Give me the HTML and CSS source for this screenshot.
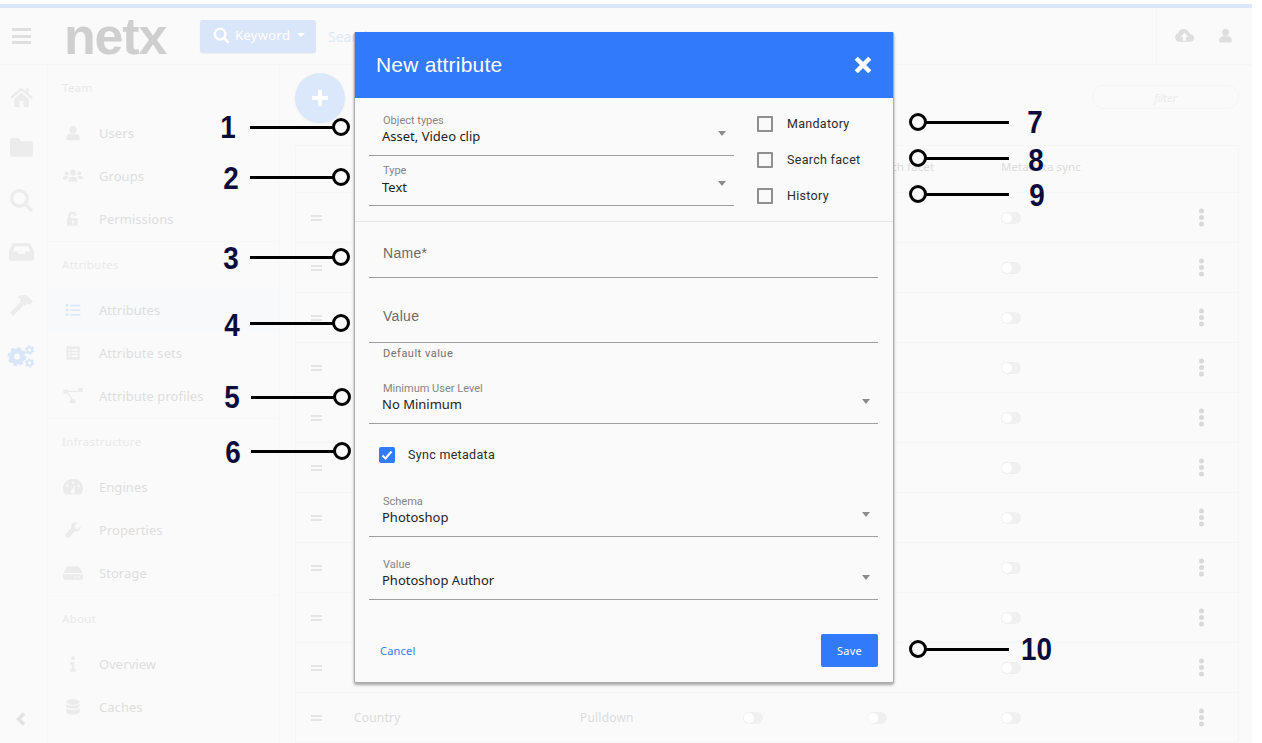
FILE: index.html
```html
<!DOCTYPE html>
<html lang="en">
<head>
<meta charset="utf-8">
<title>New attribute</title>
<link rel="stylesheet" href="styles.css">
</head>
<body>
<svg class="defs" width="0" height="0">
  <symbol id="i-user" viewBox="0 0 24 24"><circle cx="12" cy="7" r="5.5"/><path d="M2 21v-2c0-4 3-6 6-6h8c3 0 6 2 6 6v2a2 2 0 0 1-2 2H4a2 2 0 0 1-2-2z"/></symbol>
  <symbol id="i-users" viewBox="0 0 24 18"><circle cx="12" cy="5" r="3.6"/><circle cx="4.5" cy="6" r="2.4"/><circle cx="19.500" cy="6" r="2.400"/><path d="M6.500 16v-2c0-2.500 2-4 4-4h3c2 0 4 1.500 4 4v2zM0 12c0-2 1-3 3-3h2.500c.6 0 1 .3 1.300.6C5.500 10.500 5 12 5 13H0zM24 12c0-2-1-3-3-3h-2.500c-.6 0-1 .3-1.300.6 1.300.9 1.800 2.400 1.800 3.400h5z"/></symbol>
  <symbol id="i-lock" viewBox="0 0 24 24"><path fill-rule="evenodd" d="M5 11V7a6 6 0 0 1 12 0h-3a3 3 0 0 0-6 0v4h11v11H3V11zM12 14a2 2 0 0 0-1 3.700V20h2v-2.300A2 2 0 0 0 12 14z"/></symbol>
  <symbol id="i-list" viewBox="0 0 24 24"><rect x="1" y="3" width="4" height="4"/><rect x="1" y="10" width="4" height="4"/><rect x="1" y="17" width="4" height="4"/><rect x="8" y="4" width="15" height="2.500"/><rect x="8" y="11" width="15" height="2.500"/><rect x="8" y="18" width="15" height="2.500"/></symbol>
  <symbol id="i-sets" viewBox="0 0 24 24"><path fill-rule="evenodd" d="M2 2h20v20H2zM5 6v2.500h3V6zm5 0v2.500h9V6zM5 10.700v2.500h3v-2.500zm5 0v2.500h9v-2.500zM5 15.500V18h3v-2.500zm5 0V18h9v-2.500z"/></symbol>
  <symbol id="i-profile" viewBox="0 0 24 20"><rect x="0" y="2" width="6" height="5"/><rect x="18" y="0" width="6" height="5"/><rect x="8" y="14" width="7" height="5"/><path d="M6 3.500h12v1.500H6zM5 6.500l1.300-.8 5.500 8.500-1.300.8z"/></symbol>
  <symbol id="i-gauge" viewBox="0 0 24 20"><path fill-rule="evenodd" d="M12 0a12 12 0 0 1 10.500 18.500l-.7.9H2.200l-.7-.9A12 12 0 0 1 12 0zM12 3a1.500 1.500 0 1 0 0 3 1.500 1.500 0 0 0 0-3zM5 7a1.500 1.500 0 1 0 0 3 1.500 1.500 0 0 0 0-3zM19 7a1.500 1.500 0 1 0 0 3 1.500 1.500 0 0 0 0-3zM14.500 7.500L11 13a2.500 2.500 0 1 0 2.500 1z"/></symbol>
  <symbol id="i-wrench" viewBox="0 0 24 24"><path d="M23 6l-4.500 4.500-3.500-1-1-3.500L18.500 1.500C15-.500 10.500 1 9.500 5c-.3 1.200-.2 2.700.3 3.800L1.500 17.500a3.500 3.500 0 0 0 5 5l8.500-8.500c4.500 1.500 10-2.500 8-8z"/></symbol>
  <symbol id="i-storage" viewBox="0 0 24 16"><path fill-rule="evenodd" d="M5 0h14l4.500 8H.5zM0 9.500h24V14a2 2 0 0 1-2 2H2a2 2 0 0 1-2-2zM15 12a1 1 0 1 0 0 2 1 1 0 0 0 0-2zM19 12a1 1 0 1 0 0 2 1 1 0 0 0 0-2z"/></symbol>
  <symbol id="i-info" viewBox="0 0 12 24"><circle cx="6" cy="3.500" r="3"/><path d="M1.500 9H8v11h2.500v3.500h-9V20H4v-7.500H1.500z"/></symbol>
  <symbol id="i-db" viewBox="0 0 24 24"><ellipse cx="12" cy="4.500" rx="10" ry="4"/><path d="M2 7.500c2 3 18 3 20 0V12c-2 3.500-18 3.500-20 0zM2 14c2 3.500 18 3.500 20 0v5.500c-1 5-19 5-20 0z"/></symbol>
</svg>

<div class="app">
  <header class="topbar">
    <div class="burger"><i></i><i></i><i></i></div>
    <div class="logo">netx</div>
    <button class="keyword">
      <svg class="kw-search" viewBox="0 0 24 24"><circle cx="10" cy="10" r="7.500"/><path d="M15.500 15.500L22 22"/></svg>
      <span>Keyword</span><b class="kw-caret"></b>
    </button>
    <span class="search-hint">Search</span>
    <div class="top-actions">
      <svg class="top-cloud" viewBox="0 0 24 18"><path fill-rule="evenodd" d="M19.500 7.500A4.500 4.500 0 0 1 19 17H5.500A5.500 5.500 0 0 1 4 6.300 7 7 0 0 1 17.200 4.800a4.500 4.500 0 0 1 2.300 2.700zM12 5.500L7 10.500h3v5h4v-5h3z"/></svg>
      <svg class="top-user" viewBox="0 0 24 24"><use href="#i-user"/></svg>
    </div>
  </header>
  <div class="workspace">
    <nav class="rail">
      <svg class="rail-ico" viewBox="0 0 24 24"><path d="M12 3L1 12.500l1.500 1.700L12 6.200l9.500 8 1.500-1.700-4-3.400V4h-3v3.200zM5 14.500l7-6 7 6V22h-5v-6h-4v6H5z"/></svg>
      <svg class="rail-ico" viewBox="0 0 24 24"><path d="M1 4a2 2 0 0 1 2-2h6.500l2.500 3h9a2 2 0 0 1 2 2v11a2 2 0 0 1-2 2H3a2 2 0 0 1-2-2z"/></svg>
      <svg class="rail-ico rail-stroke" viewBox="0 0 24 24"><circle cx="10" cy="10" r="7.500"/><path d="M15.500 15.500L22 22"/></svg>
      <svg class="rail-ico" viewBox="0 0 24 24"><path fill-rule="evenodd" d="M5 3h14a2 2 0 0 1 1.800 1L24 11v7a2 2 0 0 1-2 2H2a2 2 0 0 1-2-2v-7L3.200 4A2 2 0 0 1 5 3zM5.500 6L3.500 11H8l1.500 2.500h5L16 11h4.500l-2-5z"/></svg>
      <svg class="rail-ico" viewBox="0 0 24 24"><path d="M1 20L11 9.500l3 3L4 23zM8 5.500C11 2 16 2 18.500 4.500L23 9l-3.500 3.500-1.500-1.500-2.500 2.500-5-5 1.200-1.200C11 6 9.500 5.700 8 5.500z"/></svg>
      <svg class="rail-ico rail-cogs" viewBox="0 0 28 24">
        <circle class="cog-body" cx="10" cy="12" r="5.500"/><circle class="cog-teeth" cx="10" cy="12" r="8"/>
        <circle class="cog-small" cx="22.500" cy="5.500" r="2.700"/><circle class="cog-small-t" cx="22.500" cy="5.500" r="4"/>
        <circle class="cog-small" cx="22.500" cy="18.500" r="2.700"/><circle class="cog-small-t" cx="22.500" cy="18.500" r="4"/>
      </svg>
      <svg class="rail-collapse" viewBox="0 0 10 14"><path d="M8 1.500L2.500 7 8 12.500"/></svg>
    </nav>
    <aside class="sidebar">
      <section class="side-group">
        <h4>Team</h4>
        <a class="side-item"><svg class="side-ico"><use href="#i-user"/></svg>Users</a>
        <a class="side-item"><svg class="side-ico"><use href="#i-users"/></svg>Groups</a>
        <a class="side-item"><svg class="side-ico"><use href="#i-lock"/></svg>Permissions</a>
      </section>
      <section class="side-group">
        <h4>Attributes</h4>
        <a class="side-item active"><svg class="side-ico"><use href="#i-list"/></svg>Attributes</a>
        <a class="side-item"><svg class="side-ico"><use href="#i-sets"/></svg>Attribute sets</a>
        <a class="side-item"><svg class="side-ico"><use href="#i-profile"/></svg>Attribute profiles</a>
      </section>
      <section class="side-group">
        <h4>Infrastructure</h4>
        <a class="side-item"><svg class="side-ico"><use href="#i-gauge"/></svg>Engines</a>
        <a class="side-item"><svg class="side-ico"><use href="#i-wrench"/></svg>Properties</a>
        <a class="side-item"><svg class="side-ico"><use href="#i-storage"/></svg>Storage</a>
      </section>
      <section class="side-group">
        <h4>About</h4>
        <a class="side-item"><svg class="side-ico"><use href="#i-info"/></svg>Overview</a>
        <a class="side-item"><svg class="side-ico"><use href="#i-db"/></svg>Caches</a>
      </section>
    </aside>
    <main class="main">
      <div class="main-bar">
        <div class="fab"><svg viewBox="0 0 20 20"><path d="M10 2v16M2 10h16"/></svg></div>
        <div class="filter">filter</div>
      </div>
      <div class="table">
        <div class="row head"><span></span><span></span><span></span><span></span><span>Search facet</span><span>Metadata sync</span><span></span></div>
        <div class="row"><i class="grip"></i><span></span><span></span><i class="tog"></i><i class="tog"></i><i class="tog"></i><i class="dots"></i></div>
        <div class="row"><i class="grip"></i><span></span><span></span><i class="tog"></i><i class="tog"></i><i class="tog"></i><i class="dots"></i></div>
        <div class="row"><i class="grip"></i><span></span><span></span><i class="tog"></i><i class="tog"></i><i class="tog"></i><i class="dots"></i></div>
        <div class="row"><i class="grip"></i><span></span><span></span><i class="tog"></i><i class="tog"></i><i class="tog"></i><i class="dots"></i></div>
        <div class="row"><i class="grip"></i><span></span><span></span><i class="tog"></i><i class="tog"></i><i class="tog"></i><i class="dots"></i></div>
        <div class="row"><i class="grip"></i><span></span><span></span><i class="tog"></i><i class="tog"></i><i class="tog"></i><i class="dots"></i></div>
        <div class="row"><i class="grip"></i><span></span><span></span><i class="tog"></i><i class="tog"></i><i class="tog"></i><i class="dots"></i></div>
        <div class="row"><i class="grip"></i><span></span><span></span><i class="tog"></i><i class="tog"></i><i class="tog"></i><i class="dots"></i></div>
        <div class="row"><i class="grip"></i><span></span><span></span><i class="tog"></i><i class="tog"></i><i class="tog"></i><i class="dots"></i></div>
        <div class="row"><i class="grip"></i><span></span><span></span><i class="tog"></i><i class="tog"></i><i class="tog"></i><i class="dots"></i></div>
        <div class="row"><i class="grip"></i><span>Country</span><span>Pulldown</span><i class="tog"></i><i class="tog"></i><i class="tog"></i><i class="dots"></i></div>
      </div>
    </main>
  </div>
</div>

<div class="modal">
  <div class="modal-head">
    <h2>New attribute</h2>
    <svg class="close" viewBox="0 0 16 16"><path d="M2 2l12 12M14 2L2 14"/></svg>
  </div>
  <div class="modal-top">
    <div class="top-selects">
      <div class="select"><label>Object types</label><div class="val">Asset, Video clip</div><b class="arrow"></b></div>
      <div class="select"><label>Type</label><div class="val">Text</div><b class="arrow"></b></div>
    </div>
    <div class="checks">
      <div class="check"><i class="box"></i>Mandatory</div>
      <div class="check"><i class="box"></i>Search facet</div>
      <div class="check"><i class="box"></i>History</div>
    </div>
  </div>
  <div class="modal-body">
    <div class="input input-name">Name*</div>
    <div class="input input-value">Value</div>
    <div class="help">Default value</div>
    <div class="select select-min"><label>Minimum User Level</label><div class="val">No Minimum</div><b class="arrow"></b></div>
    <div class="check sync"><i class="box on"><svg viewBox="0 0 16 16"><path d="M3.500 8.500l3 3 6-7"/></svg></i>Sync metadata</div>
    <div class="select"><label>Schema</label><div class="val">Photoshop</div><b class="arrow"></b></div>
    <div class="select select-last"><label>Value</label><div class="val">Photoshop Author</div><b class="arrow"></b></div>
  </div>
  <div class="modal-foot">
    <a class="cancel">Cancel</a>
    <button class="save">Save</button>
  </div>
</div>

<div class="callout c1"><b>1</b><i class="line"></i><i class="dot"></i></div>
<div class="callout c2"><b>2</b><i class="line"></i><i class="dot"></i></div>
<div class="callout c3"><b>3</b><i class="line"></i><i class="dot"></i></div>
<div class="callout c4"><b>4</b><i class="line"></i><i class="dot"></i></div>
<div class="callout c5"><b>5</b><i class="line"></i><i class="dot"></i></div>
<div class="callout c6"><b>6</b><i class="line"></i><i class="dot"></i></div>
<div class="callout right c7"><i class="dot"></i><i class="line"></i><b>7</b></div>
<div class="callout right c8"><i class="dot"></i><i class="line"></i><b>8</b></div>
<div class="callout right c9"><i class="dot"></i><i class="line"></i><b>9</b></div>
<div class="callout right c10"><i class="dot"></i><i class="line"></i><b>10</b></div>
</body>
</html>
```

FILE: styles.css
```css
* { box-sizing: border-box; }
html, body { margin: 0; height: 743px; overflow: hidden; background: #fff; }
body { font-family: "Noto Sans", sans-serif; position: relative; padding-top: 4px; }
.defs { position: absolute; }
i, b { display: block; }

.app { width: 1252px; height: 739px; background: #fafafa; border-top: 4px solid #dbe7fb; overflow: hidden; }

/* top bar */
.topbar { height: 57px; display: flex; align-items: center; border-bottom: 1px solid #f6f6f6; }
.burger { width: 19px; margin-left: 12px; display: flex; flex-direction: column; gap: 3.500px; }
.burger i { height: 3px; background: #dfdfdf; }
.logo { margin-left: 33px; width: 136px; font: bold 52px/55px "Liberation Sans", sans-serif; letter-spacing: -1.200px; color: #cfcfcf; }
.keyword { width: 116px; height: 33px; border: 0; border-radius: 3px; background: #d9e5f8; color: #fff; display: flex; align-items: center; padding: 0 0 2px 13px; font: 13px "Noto Sans", sans-serif; letter-spacing: .35px; box-shadow: 0 1px 2px #eee; }
.kw-search { width: 17px; height: 17px; fill: none; stroke: #fff; stroke-width: 3.500; margin-right: 5px; }
.kw-caret { margin-left: 7px; border: 4px solid transparent; border-top-color: #fff; border-bottom: 0; }
.search-hint { margin-left: 12px; font-size: 14px; color: #dce8fb; }
.top-actions { margin-left: auto; width: 96px; height: 100%; border-left: 1px solid #f6f6f6; display: flex; align-items: center; padding: 0 0 2px 18px; }
.top-cloud { width: 19px; height: 15px; fill: #dedede; }
.top-user { width: 15px; height: 15px; fill: #dedede; margin-left: 24px; }

.workspace { display: flex; height: 678px; }

/* rail */
.rail { width: 48px; border-right: 1px solid #f7f7f7; display: flex; flex-direction: column; align-items: center; padding-top: 5px; padding-right: 5px; }
.rail-ico { width: 25px; height: 25px; margin: 13.500px 0; flex: none; fill: #ececec; }
.rail-stroke { fill: none; stroke: #ececec; stroke-width: 3.200; }
.rail-cogs { fill: none; width: 28px; }
.cog-body { stroke: #d9e5f8; stroke-width: 5; fill: #fafafa; }
.cog-teeth { stroke: #d9e5f8; stroke-width: 3; stroke-dasharray: 3.300 3; }
.cog-small { stroke: #d9e5f8; stroke-width: 2; }
.cog-small-t { stroke: #d9e5f8; stroke-width: 1.500; stroke-dasharray: 2 2.200; }
.rail-collapse { width: 10px; height: 14px; margin-top: auto; margin-bottom: 17px; fill: none; stroke: #e3e3e3; stroke-width: 3.500; }

/* sidebar */
.sidebar { width: 232px; border-right: 1px solid #f7f7f7; flex: none; }
.side-group { height: 177px; border-bottom: 1px solid #f7f7f7; padding-top: 15px; }
.side-group:last-child { border-bottom: 0; }
.side-group h4 { margin: 0 0 15px 14px; font-size: 11.500px; line-height: 16px; font-weight: 400; color: #e9e9e9; letter-spacing: .3px; }
.side-item { height: 43px; display: flex; align-items: center; padding-left: 15px; font-size: 13px; color: #dedede; letter-spacing: .05px; }
.side-ico { width: 20px; height: 16px; margin-right: 16px; fill: #ebebeb; flex: none; }
.side-item.active { background: #f7f9fb; }
.side-item.active .side-ico { fill: #dbe7fb; }

/* main */
.main { flex: 1; padding: 0 13px 0 15px; min-width: 0; }
.main-bar { height: 80px; display: flex; justify-content: space-between; padding-top: 8px; }
.fab { width: 50px; height: 50px; border-radius: 50%; background: #dbe7fa; display: flex; align-items: center; justify-content: center; box-shadow: 0 1px 3px #f0f0f0; }
.fab svg { width: 20px; height: 20px; fill: none; stroke: #fff; stroke-width: 4; }
.filter { width: 147px; height: 24px; margin-top: 12px; border: 1px solid #f5f5f5; border-radius: 12px; text-align: center; font-size: 11px; line-height: 23px; font-style: italic; color: #ececec; }
.table { border: 1px solid #f6f6f6; border-bottom: 0; width: 944px; }
.row { height: 50px; display: grid; grid-template-columns: 58px 226px 163px 124px 134px 195px 1fr; align-items: center; border-bottom: 1px solid #f6f6f6; font-size: 12px; color: #dcdcdc; letter-spacing: .2px; }
.row.head { height: 47px; padding-bottom: 6px; font-size: 11.500px; letter-spacing: .1px; }
.grip { width: 11px; height: 6px; margin-left: 15px; border-top: 2px solid #e4e4e4; border-bottom: 2px solid #e4e4e4; }
.tog { width: 20px; height: 12px; border-radius: 6px; background: #f0f0f0; position: relative; }
.tog::before { content: ""; display: block; width: 10px; height: 10px; margin: 1px; border-radius: 50%; background: #fff; }
.dots { width: 5px; height: 5px; margin-left: 2.500px; border-radius: 50%; background: #d9d9d9; box-shadow: 0 -6.500px 0 #d9d9d9, 0 6.500px 0 #d9d9d9; }

/* modal */
.modal { position: absolute; left: 354px; top: 32px; width: 540px; height: 651px; background: #fafafa; border: 1px solid #ababab; border-top: 0; border-radius: 2px; box-shadow: 0 2px 3px rgba(0,0,0,.35); }
.modal-head { height: 66px; background: #317af9; display: flex; align-items: center; justify-content: space-between; padding: 0 21px; color: #fff; }
.modal-head h2 { margin: 0; font: 400 21px "Liberation Sans", sans-serif; letter-spacing: .2px; }
.close { width: 18px; height: 18px; fill: none; stroke: #fff; stroke-width: 4; }
.modal-top { height: 124px; display: flex; border-bottom: 1px solid #e6e6e6; padding-left: 14px; }
.top-selects { width: 365px; padding-top: 8px; }
.select { height: 50px; position: relative; border-bottom: 1px solid #9e9e9e; padding: 8px 13px 0; }
.select label { display: block; font: 11px/13px Roboto, sans-serif; color: #858585; margin-left: 1px; }
.select .val { font-size: 13px; line-height: 18px; color: #222; }
.select + .select .val { margin-top: 1px; }
.modal-body .select .val { margin-top: 0; }
.arrow { position: absolute; right: 8px; top: 25px; border: 4px solid transparent; border-top: 5px solid #8c8c8c; border-bottom: 0; }
.checks { padding: 7px 0 0 23px; }
.checks .box { margin-top: 2px; }
.check { height: 36px; display: flex; align-items: center; font: 12.500px Roboto, sans-serif; letter-spacing: .3px; color: #2b2b2b; }
.box { width: 16px; height: 16px; flex: none; margin-right: 14px; border: 2px solid #8f8f8f; border-radius: 1px; }
.modal-body { padding: 0 15px 0 14px; }
.input { border-bottom: 1px solid #9e9e9e; padding-left: 14px; font: 14px/20px "Liberation Sans", sans-serif; color: #6a6a6a; letter-spacing: .3px; }
.input-name { height: 56px; padding-top: 21px; }
.input-value { height: 65px; padding-top: 28px; }
.help { height: 21px; padding-left: 14px; font: 11px/21px Roboto, sans-serif; letter-spacing: .5px; color: #6f6f6f; }
.select-min { margin-top: 10px; }
.check.sync { height: 63px; padding-left: 10px; padding-bottom: 3px; }
.box.on { background: #317af9; border: 0; border-radius: 2px; margin: 2px 13px 0 0; }
.box.on svg { display: block; width: 16px; height: 16px; fill: none; stroke: #fff; stroke-width: 2; }
.select-last { margin-top: 13px; }
.modal-foot { display: flex; justify-content: space-between; align-items: center; padding: 34px 15px 0 25px; }
.cancel { font-size: 11px; color: #317af9; letter-spacing: .2px; }
.save { width: 57px; height: 33px; border: 0; border-radius: 2px; background: #317af9; color: #fff; font: 11px "Noto Sans", sans-serif; letter-spacing: .2px; }

/* annotation callouts */
.callout { position: absolute; display: flex; align-items: center; height: 18px; }
.callout b { width: 30px; text-align: center; font: bold 32px/18px "Liberation Sans", sans-serif; color: #0a0a3c; position: relative; transform: scaleX(.87); }
.callout .line { width: 83px; height: 3px; background: #000; }
.callout .dot { width: 18px; height: 18px; flex: none; border: 3px solid #000; border-radius: 50%; margin-left: -1px; }
.callout.right .dot { margin: 0 -1px 0 0; }
.callout.right b { margin-left: 11px; }
.c1 { left: 220px; top: 118px; }
.c2 { left: 220px; top: 168px; }
.c3 { left: 220px; top: 248px; }
.c4 { left: 220px; top: 314px; }
.c5 { left: 221px; top: 388px; }
.c6 { left: 221px; top: 442px; }
.c7 { left: 909px; top: 113px; }
.c8 { left: 909px; top: 149px; }
.c9 { left: 909px; top: 185px; }
.c10 { left: 909px; top: 640px; }
.c1 b { left: -7px; }
.c2 b, .c3 b { left: -4px; top: 1px; }
.c4 b { left: -3px; top: 2px; }
.c5 b { left: -4px; }
.c6 b { left: -3px; top: 1px; }
.c8 b { left: 1px; top: 2px; }
.c9 b { left: 2px; top: 1px; }
.c10 b { left: -1px; }
```
